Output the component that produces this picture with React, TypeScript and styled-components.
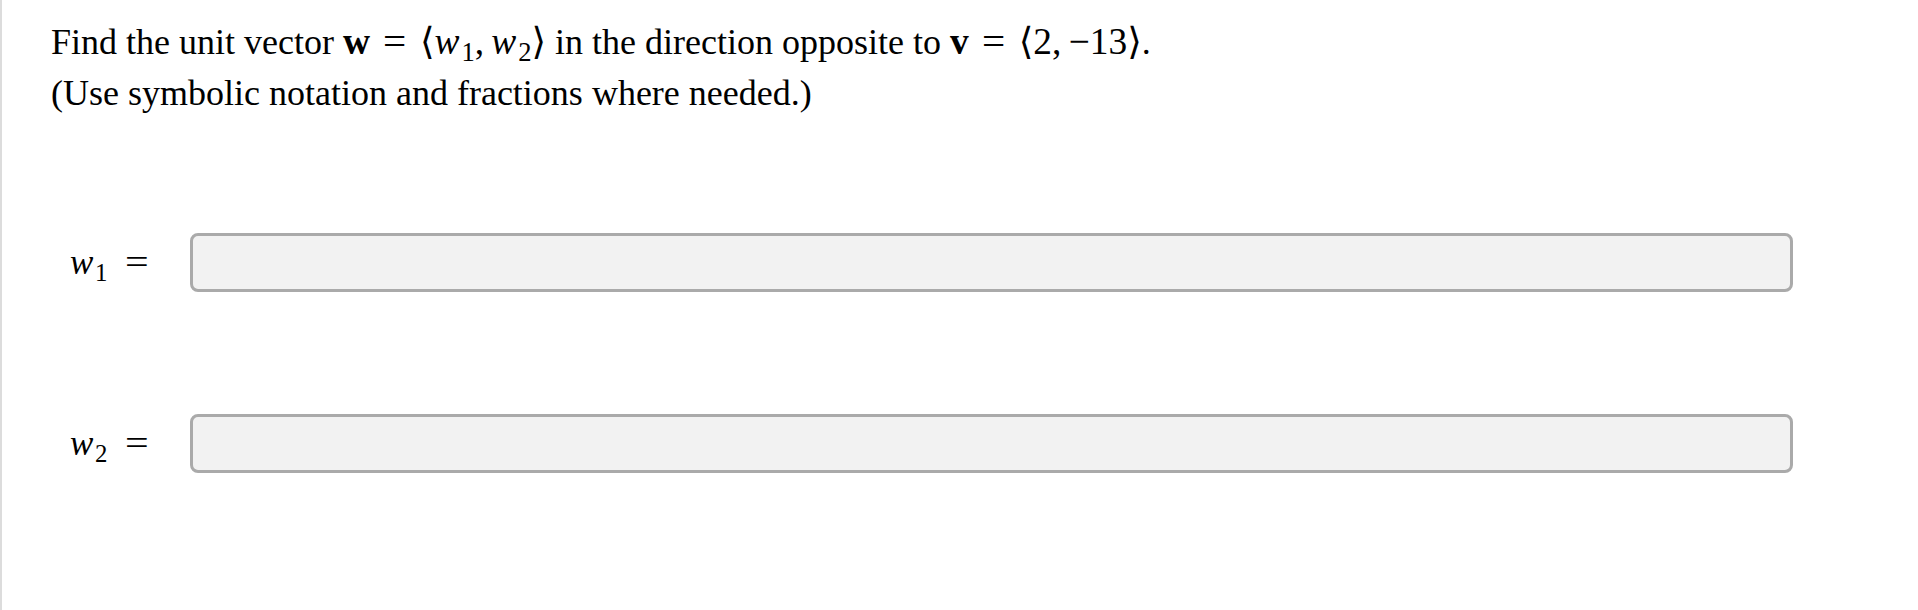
import React from "react";
import styled, { createGlobalStyle } from "styled-components";

const Global = createGlobalStyle`
  html, body { margin: 0; padding: 0; background: #fff; }
  body { font-family: "Liberation Serif", "Times New Roman", serif; color: #000; }
`;

const Page = styled.div`
  box-sizing: border-box;
  min-height: 610px;
  border-left: 2px solid #dcdcdc;
  padding: 17px 125px 0 49px;
`;

const Question = styled.p`
  margin: 0;
  font-size: 36px;
  line-height: 51px;
  white-space: nowrap;
`;

const Math = styled.span`
  font-size: 1.04em;
  line-height: 0;
`;

const Bold = styled.b`
  font-weight: 700;
`;

const MathVar = styled.i`
  font-style: italic;
  font-family: "Liberation Serif", "DejaVu Serif", serif;
  letter-spacing: 0.05em;
`;

const Sub = styled.sub`
  font-size: 0.71em;
  font-style: normal;
  vertical-align: -0.28em;
  line-height: 0;
`;

const Rel = styled.span<{ $label?: boolean }>`
  display: inline-block;
  margin: ${(p) => (p.$label ? "0 0 0 0.55em" : "0 0.385em")};
  transform: scaleX(${(p) => (p.$label ? 1.2 : 1.1)});
`;

const Bracket = styled.span`
  font-family: "DejaVu Serif", serif;
  font-weight: 300;
`;

const Comma = styled.span`
  margin-right: 0.195em;
`;

const Rows = styled.div`
  display: flex;
  flex-direction: column;
  gap: 122px;
  margin-top: 114px;
`;

const Row = styled.div`
  display: flex;
  align-items: center;
`;

const Label = styled.div`
  box-sizing: border-box;
  width: 139px;
  padding-left: 19px;
  font-size: 35px;
  white-space: nowrap;
`;

const Input = styled.input`
  flex: 1;
  box-sizing: border-box;
  height: 59px;
  border: 3px solid #aaaaaa;
  border-radius: 8px;
  background: #f2f2f2;
  outline: none;
  font-size: 24px;
`;

export default function App() {
  return (
    <>
      <Global />
      <Page>
        <Question>
          Find the unit vector{" "}
          <Math>
            <Bold>w</Bold>
            <Rel>=</Rel>
            <Bracket>⟨</Bracket>
            <MathVar>w</MathVar>
            <Sub>1</Sub>
            <Comma>,</Comma>
            <MathVar>w</MathVar>
            <Sub>2</Sub>
            <Bracket>⟩</Bracket>
          </Math>{" "}
          in the direction opposite to{" "}
          <Math>
            <Bold>v</Bold>
            <Rel>=</Rel>
            <Bracket>⟨</Bracket>2<Comma>,</Comma>−13<Bracket>⟩</Bracket>
          </Math>
          .
        </Question>
        <Question>(Use symbolic notation and fractions where needed.)</Question>
        <Rows>
          <Row>
            <Label>
              <MathVar>w</MathVar>
              <Sub>1</Sub>
              <Rel $label>=</Rel>
            </Label>
            <Input type="text" aria-label="w1" />
          </Row>
          <Row>
            <Label>
              <MathVar>w</MathVar>
              <Sub>2</Sub>
              <Rel $label>=</Rel>
            </Label>
            <Input type="text" aria-label="w2" />
          </Row>
        </Rows>
      </Page>
    </>
  );
}
